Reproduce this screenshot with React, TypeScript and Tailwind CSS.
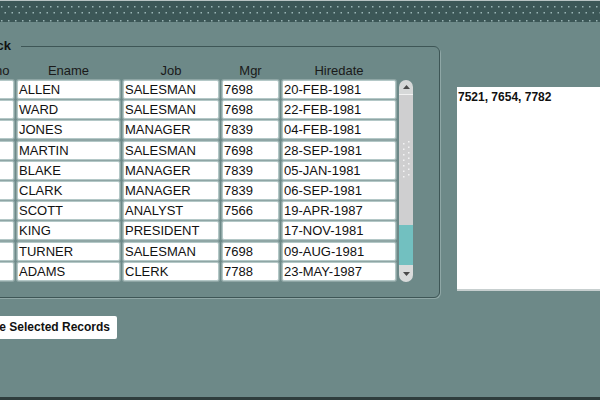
import React from 'react';

type Emp = {
  empno: string;
  ename: string;
  job: string;
  mgr: string;
  hiredate: string;
};

const EMPS: Emp[] = [
  { empno: '7499', ename: 'ALLEN', job: 'SALESMAN', mgr: '7698', hiredate: '20-FEB-1981' },
  { empno: '7521', ename: 'WARD', job: 'SALESMAN', mgr: '7698', hiredate: '22-FEB-1981' },
  { empno: '7566', ename: 'JONES', job: 'MANAGER', mgr: '7839', hiredate: '04-FEB-1981' },
  { empno: '7654', ename: 'MARTIN', job: 'SALESMAN', mgr: '7698', hiredate: '28-SEP-1981' },
  { empno: '7698', ename: 'BLAKE', job: 'MANAGER', mgr: '7839', hiredate: '05-JAN-1981' },
  { empno: '7782', ename: 'CLARK', job: 'MANAGER', mgr: '7839', hiredate: '06-SEP-1981' },
  { empno: '7788', ename: 'SCOTT', job: 'ANALYST', mgr: '7566', hiredate: '19-APR-1987' },
  { empno: '7839', ename: 'KING', job: 'PRESIDENT', mgr: '', hiredate: '17-NOV-1981' },
  { empno: '7844', ename: 'TURNER', job: 'SALESMAN', mgr: '7698', hiredate: '09-AUG-1981' },
  { empno: '7876', ename: 'ADAMS', job: 'CLERK', mgr: '7788', hiredate: '23-MAY-1987' },
];

const COLS: { key: keyof Emp; label: string; width: string }[] = [
  { key: 'empno', label: 'Empno', width: 'w-[50px]' },
  { key: 'ename', label: 'Ename', width: 'w-[103px]' },
  { key: 'job', label: 'Job', width: 'w-[96px]' },
  { key: 'mgr', label: 'Mgr', width: 'w-[57px]' },
  { key: 'hiredate', label: 'Hiredate', width: 'w-[114px]' },
];

function DottedBar() {
  // toolbar strip with the staggered rivet pattern
  return (
    <div className="h-[22px] border-t border-[#b9c4c4] bg-[#3c5757]">
      <svg width="600" height="21" className="block">
        <defs>
          <pattern id="rivets" width="7" height="14" patternUnits="userSpaceOnUse">
            <rect x="1" y="5" width="1.5" height="1.5" fill="#9ab5b5" />
            <rect x="4.5" y="11" width="1.5" height="1.5" fill="#9ab5b5" />
          </pattern>
        </defs>
        <rect width="600" height="21" fill="url(#rivets)" />
      </svg>
    </div>
  );
}

function ScrollBar() {
  return (
    <div className="flex h-[202px] w-[14px] shrink-0 flex-col">
      <div className="flex h-[15px] items-center justify-center rounded-t-full border-b border-[#f2f2f2] bg-[#d6d8d8]">
        <svg width="7" height="4" viewBox="0 0 7 4">
          <path d="M0 4 L3.5 0 L7 4 Z" fill="#4a4a4a" />
        </svg>
      </div>
      <div className="flex h-[130px] items-center justify-end bg-[#cfcfd0] pr-[2px]">
        <svg width="9" height="40" viewBox="0 0 9 40">
          {[0, 1, 2, 3, 4, 5, 6].map((i) => (
            <g key={i}>
              <rect x="1" y={i * 5.5 + 3} width="1.5" height="1.5" fill="#f4f4f4" />
              <rect x="6" y={i * 5.5 + 1} width="1.5" height="1.5" fill="#f4f4f4" />
            </g>
          ))}
        </svg>
      </div>
      <div className="flex-1 bg-[#72c0c0]" />
      <div className="flex h-[17px] items-center justify-center rounded-b-full bg-[#d9dbdb]">
        <svg width="7" height="4" viewBox="0 0 7 4">
          <path d="M0 0 L3.5 4 L7 0 Z" fill="#4a4a4a" />
        </svg>
      </div>
    </div>
  );
}

function EmpFrame() {
  return (
    <div className="relative ml-[-50px] w-[490px] shrink-0 rounded-r-[6px] border border-[#3e5656] pb-[15px] pl-[13px] pt-[16px] shadow-[1px_1px_0_#8fa7a6]">
      <span className="absolute right-[418px] top-[-9px] whitespace-nowrap bg-[#6d8988] pl-[4px] pr-[10px] text-[13px] font-bold leading-[16px] text-[#111]">
        Emp Block
      </span>

      <div className="mb-px flex h-[16px] gap-[3px]">
        {COLS.map((c) => (
          <div key={c.key} className={`${c.width} whitespace-nowrap text-center text-[13px] leading-[16px] text-[#1a1a1a]`}>
            {c.label}
          </div>
        ))}
      </div>

      <div className="flex items-start gap-[3px]">
        <div className="flex flex-col gap-[1.2px]">
          {EMPS.map((e) => (
            <div key={e.empno} className="flex h-[19px] gap-[3px]">
              {COLS.map((c) => (
                <div
                  key={c.key}
                  className={`${c.width} h-[19px] overflow-hidden whitespace-nowrap rounded-[2px] border border-[#b4c8c7] bg-white pl-[1px] text-[13px] leading-[17px] text-[#111] shadow-[0_0_0_1px_#8fa6a5]`}
                >
                  {e[c.key]}
                </div>
              ))}
            </div>
          ))}
        </div>
        <ScrollBar />
      </div>
    </div>
  );
}

export default function App() {
  return (
    <div className="relative flex h-[400px] w-[600px] flex-col overflow-hidden bg-[#6d8988] font-['Liberation_Sans',Arial,sans-serif]">
      <DottedBar />

      <div className="mt-[24px] flex items-start gap-[17px]">
        <EmpFrame />
        <div className="mt-[41px] h-[204px] w-[150px] shrink-0 border-b-2 border-[#c7cfcf] bg-white pl-px pt-[3px] text-[12px] font-bold leading-[14px] text-[#111]">
          7521, 7654, 7782
        </div>
      </div>

      <div className="mt-[18px] flex w-[117px] justify-end">
        <button className="h-[23px] shrink-0 whitespace-nowrap rounded-[2px] bg-white px-[7px] text-[12px] font-bold leading-[23px] text-[#111]">
          Delete Selected Records
        </button>
      </div>

      <div className="mt-auto h-[3px] bg-[#2f3d3d]" />
    </div>
  );
}
